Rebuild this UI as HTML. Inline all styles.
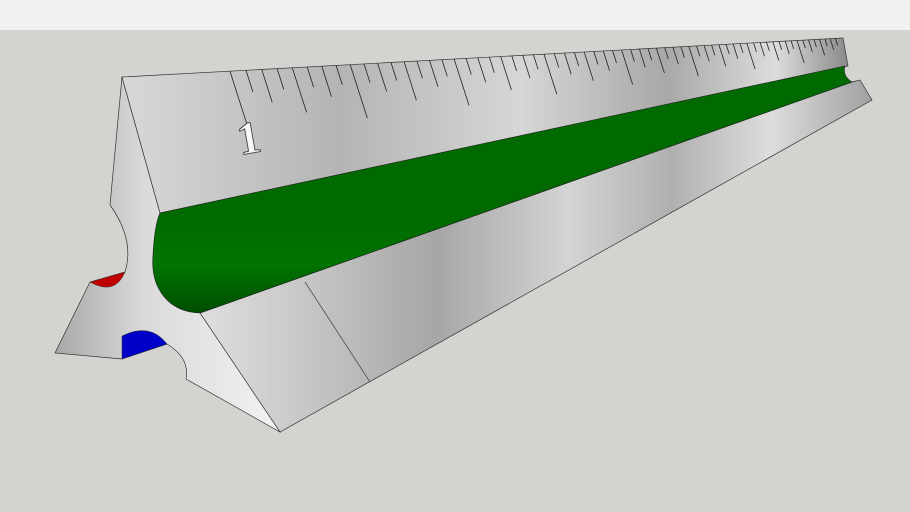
<!DOCTYPE html>
<html><head><meta charset="utf-8"><style>
html,body{margin:0;padding:0;width:910px;height:512px;overflow:hidden;background:#d3d4cf;}
svg{display:block}
</style></head><body>
<svg id="s" width="910" height="512" viewBox="0 0 910 512" xmlns="http://www.w3.org/2000/svg">
<defs>
<linearGradient id="top" x1="122" y1="0" x2="848" y2="0" gradientUnits="userSpaceOnUse">
<stop offset="0" stop-color="#d8d8d8"/><stop offset="0.3" stop-color="#b4b4b4"/><stop offset="0.55" stop-color="#d6d6d6"/><stop offset="0.75" stop-color="#a8a8a8"/><stop offset="0.9" stop-color="#dcdcdc"/><stop offset="1" stop-color="#8a8a8a"/>
</linearGradient>
<linearGradient id="low" x1="200" y1="0" x2="872" y2="0" gradientUnits="userSpaceOnUse">
<stop offset="0" stop-color="#dedede"/><stop offset="0.15" stop-color="#c8c8c8"/><stop offset="0.35" stop-color="#a6a6a6"/><stop offset="0.55" stop-color="#d4d4d4"/><stop offset="0.7" stop-color="#b0b0b0"/><stop offset="0.85" stop-color="#dddddd"/><stop offset="1" stop-color="#a0a0a0"/>
</linearGradient>
<linearGradient id="end" x1="55" y1="0" x2="280" y2="0" gradientUnits="userSpaceOnUse">
<stop offset="0" stop-color="#a8a8a8"/><stop offset="0.4" stop-color="#dadada"/><stop offset="1" stop-color="#f2f2f2"/>
</linearGradient>
<linearGradient id="grn" x1="0" y1="215" x2="0" y2="313" gradientUnits="userSpaceOnUse">
<stop offset="0" stop-color="#006a00"/><stop offset="0.5" stop-color="#007400"/><stop offset="1" stop-color="#004e00"/>
</linearGradient>
</defs>
<rect x="0" y="0" width="910" height="30" fill="#f0f1f0"/>
<path d="M122,77 L110,205 Q135,240 125,272 L90,282 L55,353 L122,359 L167,344 Q190,358 186,379 L280,432 L207,313 L160,213 Z" fill="url(#end)" stroke="#333" stroke-width="0.7"/>
<path d="M90,282 L125,272 Q115,296 90,282 Z" fill="#c00000" stroke="#333" stroke-width="0.5"/>
<path d="M122,359 L167,344 Q150,322 122,336 Z" fill="#0000c8" stroke="#333" stroke-width="0.5"/>
<path d="M122,77 L843,38 L848,66 L160,213 Z" fill="url(#top)" stroke="#333" stroke-width="0.7"/>
<path d="M200,313 L852,82 L860,80 L872,100 L280,432 Z" fill="url(#low)" stroke="#333" stroke-width="0.7"/>
<line x1="305" y1="282" x2="370" y2="382" stroke="#444" stroke-width="0.7"/>
<path d="M160,213 L845,66 Q842,76 852,82 L200,313 C170,312 150,290 153,255 C154,235 156,222 160,213 Z" fill="url(#grn)" stroke="#222" stroke-width="0.6"/>
<g id="ticks" stroke="#222" stroke-width="0.8"></g>
<text x="236" y="153" font-family="Liberation Serif, serif" font-weight="bold" font-size="46" fill="#f6f6f6" stroke="#444" stroke-width="0.9" transform="rotate(-10 250 130)">1</text>
</svg>
<script>
var g=document.getElementById('ticks'),x=230,i=0,s='';
while(x<840){var d=16-(x-230)*(11/610);var f=d/16;var y=77-(x-122)*(39/721);
var L=(i%8==0?62:(i%4==0?48:(i%2==0?34:22)))*f;
s+='<line x1="'+x.toFixed(1)+'" y1="'+y.toFixed(1)+'" x2="'+(x+L*0.32).toFixed(1)+'" y2="'+(y+L).toFixed(1)+'"/>';
x+=d;i++;}
g.innerHTML=s;
</script>
</body></html>
